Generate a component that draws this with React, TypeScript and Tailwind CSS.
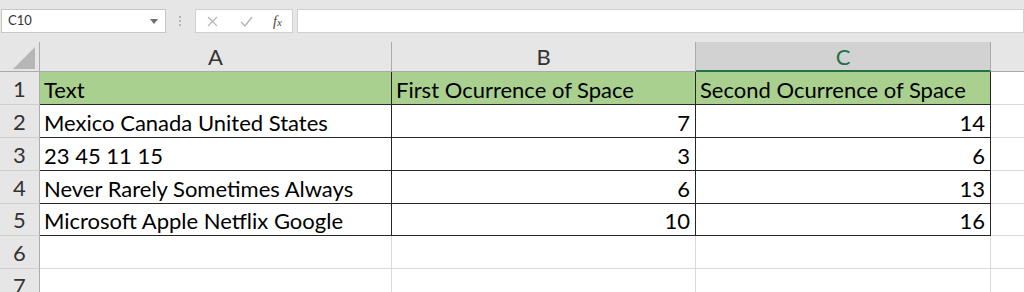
import React from "react";

type Row = {
  n: number;
  a?: string;
  b?: number;
  c?: number;
  head?: boolean;
  h: number;
};

const rows: Row[] = [
  { n: 1, a: "Text", head: true, h: 33 },
  { n: 2, a: "Mexico Canada United States", b: 7, c: 14, h: 33 },
  { n: 3, a: "23 45 11 15", b: 3, c: 6, h: 33 },
  { n: 4, a: "Never Rarely Sometimes Always", b: 6, c: 13, h: 33 },
  { n: 5, a: "Microsoft Apple Netflix Google", b: 10, c: 16, h: 32 },
  { n: 6, h: 33 },
  { n: 7, h: 33 },
];

const FormulaBar = () => (
  <div className="flex h-[42px] items-start bg-[#e6e6e6] pt-[9px]">
    <div className="ml-[1px] flex h-[24px] w-[165px] items-center justify-between border border-[#c6c6c6] bg-white pl-[6px] pr-[7px]">
      <span className="text-[13px] text-[#333]">C10</span>
      <svg width="8" height="5" viewBox="0 0 8 5">
        <path d="M0 0h8L4 5z" fill="#6f6f6f" />
      </svg>
    </div>
    <div className="ml-[13px] flex h-[24px] w-[2px] flex-col items-center justify-center gap-[2px]">
      <span className="h-[2px] w-[2px] bg-[#b4b4b4]" />
      <span className="h-[2px] w-[2px] bg-[#b4b4b4]" />
      <span className="h-[2px] w-[2px] bg-[#b4b4b4]" />
    </div>
    <div className="ml-[14px] flex h-[24px] w-[98px] items-center border border-[#d0d0d0] bg-white">
      <svg className="ml-[11px]" width="11" height="11" viewBox="0 0 11 11">
        <path d="M1 1l9 9M10 1l-9 9" stroke="#b5b5b5" strokeWidth="1.2" />
      </svg>
      <svg className="ml-[22px]" width="13" height="11" viewBox="0 0 13 11">
        <path d="M1 6l4 4 7-9" stroke="#b5b5b5" strokeWidth="1.4" fill="none" />
      </svg>
      <span className="ml-[20px] font-['Liberation_Serif',serif] text-[14px] italic text-[#444]">
        f<span className="text-[11px]">x</span>
      </span>
    </div>
    <div className="ml-[4px] h-[24px] flex-1 border border-[#d0d0d0] bg-white" />
  </div>
);

const ColumnHeaders = () => (
  <div className="flex h-[30px] bg-[#e6e6e6] text-[22px] text-[#333]">
    <div className="relative w-[40px] border-r border-b border-[#ababab]">
      <svg className="absolute left-[13px] top-[4px]" width="23" height="23" viewBox="0 0 23 23">
        <path d="M0 23L22 1V23z" fill="#b6b6b6" />
      </svg>
    </div>
    <div className="flex w-[352px] items-center justify-center border-r border-b border-[#ababab]">A</div>
    <div className="flex w-[304px] items-center justify-center border-r border-b border-[#ababab]">B</div>
    <div className="flex w-[295px] items-center justify-center border-r border-b-2 border-r-[#ababab] border-b-[#217346] bg-[#d2d2d2] text-[#217346]">
      C
    </div>
    <div className="flex-1 border-b border-[#ababab]" />
  </div>
);

const SheetRow = ({ row }: { row: Row }) => {
  const inTable = row.n <= 5;
  const line = inTable ? "border-[#262626]" : "border-[#dadada]";
  const fill = row.head ? "bg-[#a9d08e]" : "bg-white";
  return (
    <div className="flex text-[22px]" style={{ height: row.h }}>
      <div className="flex w-[40px] items-center justify-center border-r border-b border-r-[#ababab] border-b-[#cfcfcf] bg-[#e6e6e6] text-[#333]">
        {row.n}
      </div>
      <div className={`flex w-[352px] items-end border-r border-b pb-[3px] pl-[4px] leading-none ${line} ${fill}`}>
        {row.a}
      </div>
      <div className={`flex w-[304px] items-end border-r border-b pb-[3px] leading-none ${line} ${fill} ${row.head ? "justify-start pl-[4px]" : "justify-end pr-[5px]"}`}>
        {row.head ? "First Ocurrence of Space" : row.b}
      </div>
      <div className={`flex w-[295px] items-end border-r border-b pb-[3px] leading-none ${line} ${fill} ${row.head ? "justify-start pl-[4px]" : "justify-end pr-[5px]"}`}>
        {row.head ? "Second Ocurrence of Space" : row.c}
      </div>
      <div className="flex-1 border-b border-[#dadada] bg-white" />
    </div>
  );
};

export default function App() {
  return (
    <div className="h-[292px] w-[1024px] overflow-hidden bg-white font-['Lato',sans-serif] text-black">
      <FormulaBar />
      <ColumnHeaders />
      {rows.map((r) => (
        <SheetRow key={r.n} row={r} />
      ))}
    </div>
  );
}
